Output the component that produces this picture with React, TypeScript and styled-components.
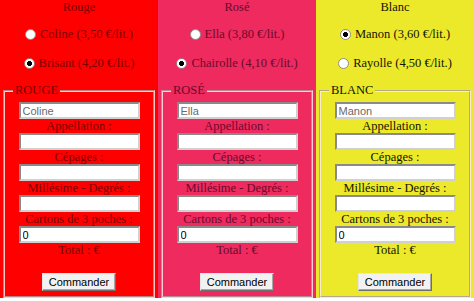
import styled, { createGlobalStyle } from "styled-components";

const GlobalStyle = createGlobalStyle`
  html, body {
    margin: 0;
    padding: 0;
    background: #ffffff;
  }
  body {
    font-family: "Liberation Serif", "Times New Roman", serif;
    font-size: 12.5px;
  }
`;

interface Wine {
  title: string;
  legend: string;
  bg: string;
  ink: string;
  choices: { name: string; price: string; checked: boolean }[];
  first: string;
}

const wines: Wine[] = [
  {
    title: "Rouge",
    legend: "ROUGE",
    bg: "#ff0000",
    ink: "#7a0000",
    choices: [
      { name: "Coline", price: "3,50", checked: false },
      { name: "Brisant", price: "4,20", checked: true },
    ],
    first: "Coline",
  },
  {
    title: "Rosé",
    legend: "ROSÉ",
    bg: "#ee2a5e",
    ink: "#6a0a2c",
    choices: [
      { name: "Ella", price: "3,80", checked: false },
      { name: "Chairolle", price: "4,10", checked: true },
    ],
    first: "Ella",
  },
  {
    title: "Blanc",
    legend: "BLANC",
    bg: "#ece92b",
    ink: "#141400",
    choices: [
      { name: "Manon", price: "3,60", checked: true },
      { name: "Rayolle", price: "4,50", checked: false },
    ],
    first: "Manon",
  },
];

const Page = styled.div`
  display: grid;
  grid-template-columns: repeat(3, 1fr);
  width: 474px;
`;

const Column = styled.section<{ $bg: string; $ink: string }>`
  display: flex;
  flex-direction: column;
  background: ${(p) => p.$bg};
  color: ${(p) => p.$ink};
  text-align: center;
`;

const Heading = styled.p`
  margin: 0;
  line-height: 15px;
`;

const Choice = styled.label<{ $gap: number }>`
  display: flex;
  justify-content: center;
  align-items: center;
  height: 15px;
  margin-top: ${(p) => p.$gap}px;
`;

const Radio = styled.input.attrs({ type: "radio" })`
  appearance: none;
  width: 11px;
  height: 11px;
  margin: 0 4px 0 0;
  border: 1px solid #8c8c8c;
  border-radius: 50%;
  background: #ffffff;
  box-sizing: border-box;

  &:checked {
    background: radial-gradient(circle, #000 0 2.2px, #fff 2.8px);
  }
`;

const Box = styled.fieldset<{ $ink: string }>`
  margin: 12px 3px 0;
  padding: 4px 8px 5px;
  border: 2px groove rgba(255, 235, 235, 0.85);
  color: ${(p) => p.$ink};
`;

const Legend = styled.legend`
  padding: 0 2px;
  line-height: 15px;
  text-align: left;
`;

const Form = styled.div`
  display: flex;
  flex-direction: column;
  align-items: center;
`;

const Label = styled.span`
  line-height: 14px;
  height: 14px;
`;

const Field = styled.input<{ $muted?: boolean }>`
  box-sizing: border-box;
  width: 121px;
  height: 17px;
  margin: 0;
  padding: 0 2px;
  border: 2px solid;
  border-color: #8a8a8a #d0d0d0 #d0d0d0 #8a8a8a;
  background: #ffffff;
  font-family: "Liberation Sans", Arial, sans-serif;
  font-size: 11px;
  color: ${(p) => (p.$muted ? "#6a6a6a" : "#000000")};
  outline: none;
`;

const Button = styled.button`
  box-sizing: border-box;
  width: 74px;
  height: 18px;
  margin-top: 16px;
  padding: 0;
  border: 1px solid;
  border-color: #e6e6e6 #6f6f6f #6f6f6f #e6e6e6;
  box-shadow: inset -1px -1px #a8a8a8;
  background: #f2f2f2;
  font-family: "Liberation Sans", Arial, sans-serif;
  font-size: 11px;
  color: #000000;
`;

const labels = ["Appellation :", "Cépages :", "Millésime - Degrés :", "Cartons de 3 poches :"];

export default function App() {
  return (
    <>
      <GlobalStyle />
      <Page>
        {wines.map((w) => (
          <Column key={w.title} $bg={w.bg} $ink={w.ink}>
            <Heading>{w.title}</Heading>
            {w.choices.map((c, i) => (
              <Choice key={c.name} $gap={i === 0 ? 12 : 14}>
                <Radio name={w.title} defaultChecked={c.checked} />
                {c.name} ({c.price} €/lit.)
              </Choice>
            ))}
            <Box $ink={w.ink}>
              <Legend>{w.legend}</Legend>
              <Form>
                <Field $muted defaultValue={w.first} readOnly />
                {labels.map((l, i) => (
                  <Form key={l}>
                    <Label>{l}</Label>
                    <Field defaultValue={i === labels.length - 1 ? "0" : ""} />
                  </Form>
                ))}
                <Label>Total : €</Label>
                <Button type="button">Commander</Button>
              </Form>
            </Box>
          </Column>
        ))}
      </Page>
    </>
  );
}
